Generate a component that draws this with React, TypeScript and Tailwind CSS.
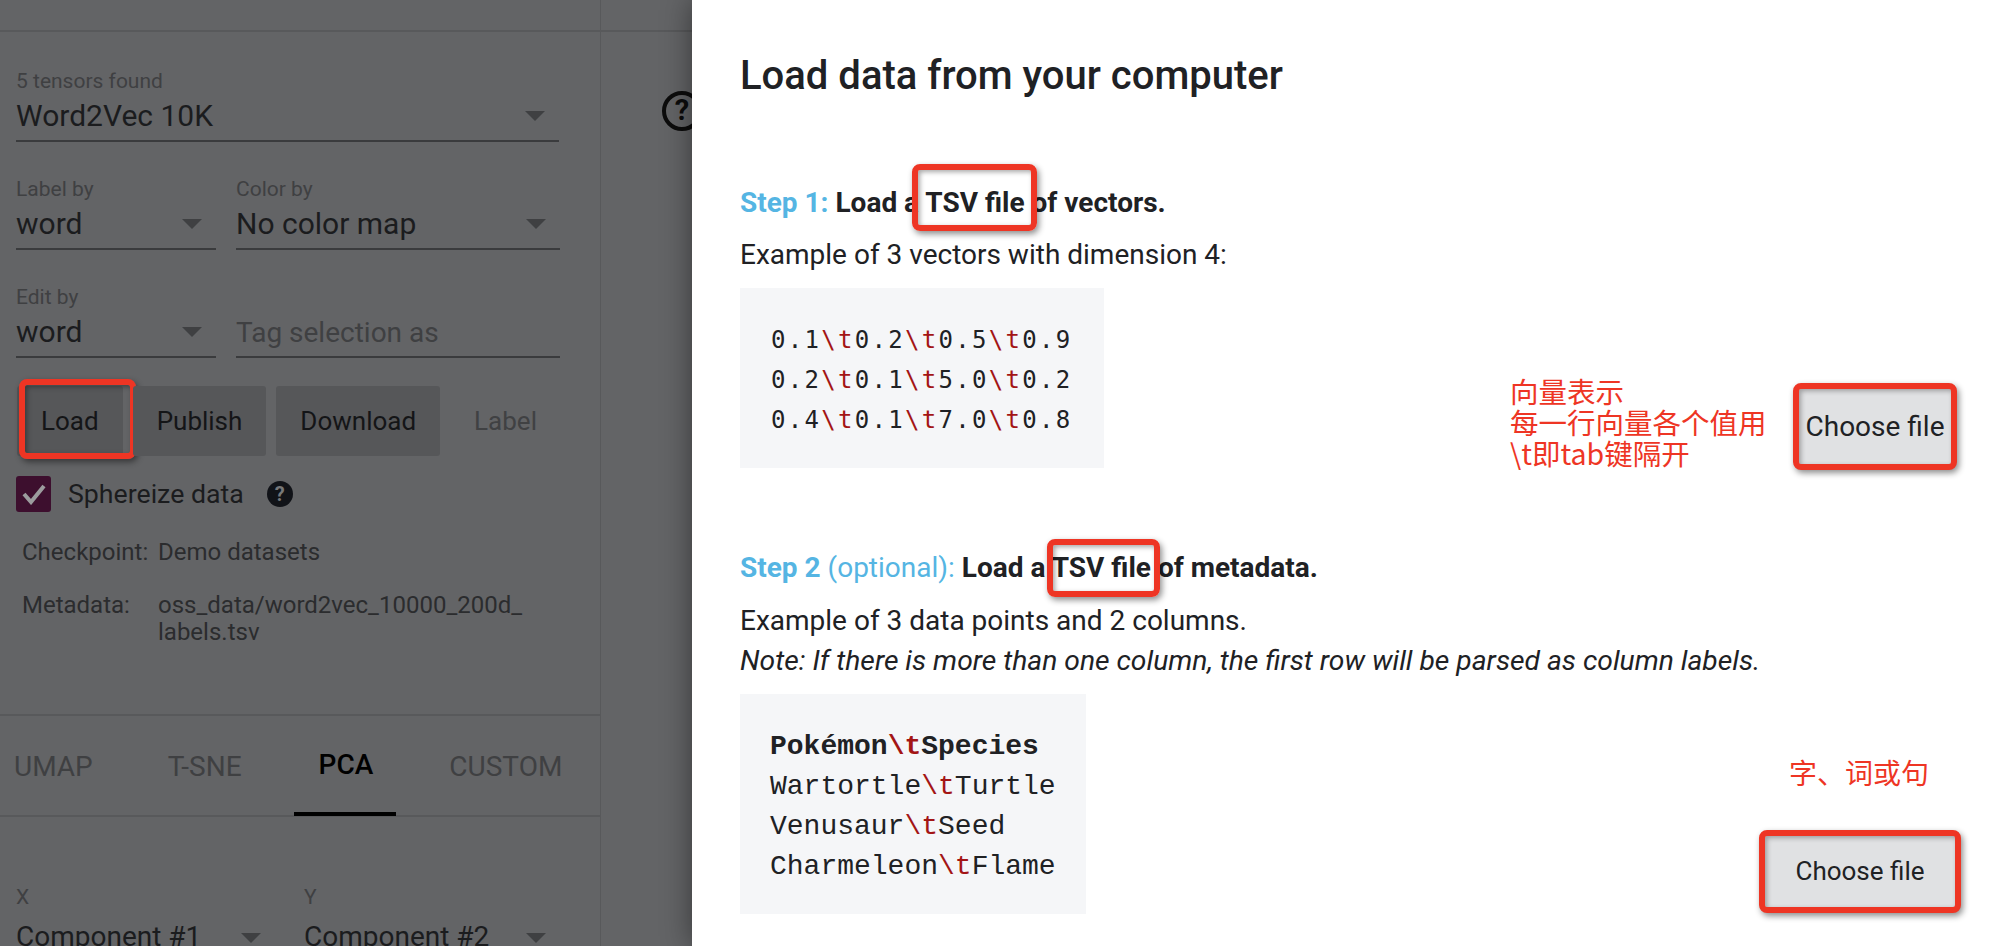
const Arrow = ({ className }: { className: string }) => (
  <svg width="20" height="10" viewBox="0 0 20 10" className={className}>
    <polygon points="0,0 20,0 10,10" fill="#3f4042" />
  </svg>
);

const Field = ({ label, value }: { label: string; value: string }) => (
  <div>
    <div className="text-[21px] leading-[24px] text-[#3f4042]">{label}</div>
    <div className="relative mt-[5px] h-[44px] border-b-2 border-[#3a3b3d] text-[30px] leading-[36px] text-[#1b1c1e]">
      {value}
      <Arrow className="absolute right-[14px] top-[13px]" />
    </div>
  </div>
);

const SideButton = ({ label, muted, outlined }: { label: string; muted?: boolean; outlined?: boolean }) => (
  <div
    className={`relative flex h-[70px] items-center rounded-[3px] px-[24px] text-[26px] ${
      muted ? "text-[#404143]" : "bg-[#565759] text-[#141517]"
    }`}
  >
    {label}
    {outlined && <RedBox className="left-[2px] right-[-13px] top-[-7px] bottom-[-3px]" />}
  </div>
);

const RedBox = ({ className }: { className: string }) => (
  <div className={`absolute rounded-[8px] border-[6px] border-[#ee3524] shadow-[2px_3px_6px_rgba(0,0,0,0.45),inset_2px_2px_5px_rgba(0,0,0,0.35)] ${className}`} />
);

const T = () => <span className="text-[#a31515]">\t</span>;

const ChooseFile = ({ className }: { className: string }) => (
  <div className={`absolute flex items-center justify-center rounded-[8px] border-[6px] border-[#ee3524] bg-[#e0e1e3] text-[#202124] shadow-[2px_3px_6px_rgba(0,0,0,0.45),inset_2px_2px_5px_rgba(0,0,0,0.3)] ${className}`}>
    Choose file
  </div>
);

const vectors = [
  ["0.1", "0.2", "0.5", "0.9"],
  ["0.2", "0.1", "5.0", "0.2"],
  ["0.4", "0.1", "7.0", "0.8"],
];

const metadata = [
  ["Wartortle", "Turtle"],
  ["Venusaur", "Seed"],
  ["Charmeleon", "Flame"],
];

export default function App() {
  return (
    <div className="relative flex h-[946px] w-[2010px] overflow-hidden bg-[#636466] font-['Roboto',sans-serif]">
      {/* projector sidebar, dimmed by the dialog overlay */}
      <aside className="h-full w-[601px] shrink-0 border-r border-[#58595b]">
        <div className="h-[32px] border-b-2 border-[#58595b]" />
        <div className="px-4 pr-[41px] pt-[37px]">
          <Field label="5 tensors found" value="Word2Vec 10K" />
          <div className="mt-[35px] grid grid-cols-[200px_324px] gap-x-5">
            <Field label="Label by" value="word" />
            <Field label="Color by" value="No color map" />
          </div>
          <div className="mt-[35px] grid grid-cols-[200px_324px] gap-x-5">
            <Field label="Edit by" value="word" />
            <div>
              <div className="h-[24px]" />
              <div className="mt-[5px] h-[44px] border-b-2 border-[#3a3b3d] text-[28px] leading-[37px] text-[#3f4042]">Tag selection as</div>
            </div>
          </div>
          <div className="ml-[1px] mt-[28px] flex gap-[10px]">
            <SideButton label="Load" outlined />
            <SideButton label="Publish" />
            <SideButton label="Download" />
            <SideButton label="Label" muted />
          </div>
          <div className="mt-5 flex h-[36px] items-center">
            <div className="flex h-[36px] w-[35px] items-center justify-center rounded-[3px] bg-[#3d0f2e]">
              <svg width="26" height="22" viewBox="0 0 26 22">
                <path d="M3 11l7 8L23 3" fill="none" stroke="#9c9c9e" strokeWidth="4" />
              </svg>
            </div>
            <span className="ml-[17px] text-[26.7px] text-[#1b1c1e]">Sphereize data</span>
            <span className="ml-[23px] flex h-[26px] w-[26px] items-center justify-center rounded-full bg-[#111318] text-[20px] font-bold text-[#77787a]">?</span>
          </div>
          <div className="mt-[26px] flex pl-[6px] text-[24px] leading-[28px] text-[#2b2c2e]">
            <span className="w-[136px] shrink-0">Checkpoint:</span>
            <span>Demo datasets</span>
          </div>
          <div className="mt-[26px] flex pl-[6px] text-[24px] leading-[27px] text-[#2b2c2e]">
            <span className="w-[136px] shrink-0">Metadata:</span>
            <span className="w-[390px]">
              oss_data/word2vec_10000_200d_
              <br />
              labels.tsv
            </span>
          </div>
        </div>
        <div className="mt-[68px] flex h-[103px] items-start border-y-2 border-[#58595b] pt-[33px] text-[28px] leading-[36px] text-[#3f4042]">
          <span className="ml-[14px]">UMAP</span>
          <span className="ml-[75px]">T-SNE</span>
          <span className="relative ml-[77px] -mt-[2px] font-medium text-black">
            PCA
            <span className="absolute left-[-25px] right-[-23px] top-[65px] h-[4px] bg-black" />
          </span>
          <span className="ml-[76px]">CUSTOM</span>
        </div>
        <div className="grid grid-cols-[288px_256px] px-4 pt-[68px]">
          <div className="relative">
            <div className="text-[21px] leading-[24px] text-[#3f4042]">X</div>
            <div className="mt-[10px] text-[28px] leading-[36px] text-[#1b1c1e]">Component #1</div>
            <Arrow className="absolute right-[43px] top-[48px]" />
          </div>
          <div className="relative">
            <div className="text-[21px] leading-[24px] text-[#3f4042]">Y</div>
            <div className="mt-[10px] text-[28px] leading-[36px] text-[#1b1c1e]">Component #2</div>
            <Arrow className="absolute right-[14px] top-[48px]" />
          </div>
        </div>
      </aside>

      {/* strip between sidebar and dialog */}
      <div className="w-[91px] shrink-0">
        <div className="h-[32px] border-b-2 border-[#58595b]" />
        <div className="ml-[61px] mt-[59px] flex h-[40px] w-[40px] items-center justify-center rounded-full border-[4px] border-[#0c0c0c] text-[29px] font-bold text-[#0c0c0c]">?</div>
      </div>

      {/* dialog */}
      <main className="relative z-10 flex-1 bg-white pl-[48px] pt-[51px] text-[#202124] shadow-[0_0_28px_rgba(0,0,0,0.45)]">
        <h1 className="text-[40px] font-medium leading-[50px]">Load data from your computer</h1>

        <p className="mt-[82px] text-[28px] font-bold leading-[40px]">
          <span className="text-[#55b5e3]">Step 1:</span> Load a{" "}
          <span className="relative">
            TSV file
            <RedBox className="left-[-13px] right-[-12px] top-[-22px] bottom-[-12px]" />
          </span>{" "}
          of vectors.
        </p>
        <p className="mt-[12px] text-[28px] leading-[40px]">Example of 3 vectors with dimension 4:</p>
        <div className="mt-[13px] w-[364px] bg-[#f5f6f8] pb-[28px] pl-[31px] pt-[32px] font-['DejaVu_Sans_Mono',monospace] text-[24px] leading-[40px] tracking-[2.3px]">
          {vectors.map((row, i) => (
            <div key={i}>
              {row.map((cell, j) => (
                <span key={j}>
                  {j > 0 && <T />}
                  {cell}
                </span>
              ))}
            </div>
          ))}
        </div>

        <p className="mt-[80px] text-[28px] font-bold leading-[40px]">
          <span className="text-[#55b5e3]">
            Step 2 <span className="font-normal">(optional):</span>
          </span>{" "}
          Load a{" "}
          <span className="relative">
            TSV file
            <RedBox className="left-[-5px] right-[-9px] top-[-12px] bottom-[-13px]" />
          </span>{" "}
          of metadata.
        </p>
        <p className="mt-[13px] text-[28px] leading-[40px]">Example of 3 data points and 2 columns.</p>
        <p className="text-[28.25px] italic leading-[40px]">Note: If there is more than one column, the first row will be parsed as column labels.</p>
        <div className="mt-[13px] w-[346px] bg-[#f5f6f8] pb-[27px] pl-[30px] pt-[33px] font-['Liberation_Mono',monospace] text-[28px] leading-[40px]">
          <div className="font-bold">
            Pokémon
            <T />
            Species
          </div>
          {metadata.map(([name, kind]) => (
            <div key={name}>
              {name}
              <T />
              {kind}
            </div>
          ))}
        </div>

        {/* hand-drawn annotations on the screenshot */}
        <div className="absolute left-[818px] top-[375px] font-['Noto_Sans_CJK_SC',sans-serif] text-[28.5px] leading-[31px] text-[#ee3524]">
          <div>向量表示</div>
          <div>每一行向量各个值用</div>
          <div>\t即tab键隔开</div>
        </div>
        <ChooseFile className="left-[1101px] top-[383px] h-[87px] w-[164px] text-[28px]" />
        <div className="absolute left-[1097px] top-[752px] font-['Noto_Sans_CJK_SC',sans-serif] text-[28px] leading-[40px] text-[#ee3524]">字、词或句</div>
        <ChooseFile className="left-[1067px] top-[830px] h-[83px] w-[202px] text-[26px]" />
      </main>
    </div>
  );
}
